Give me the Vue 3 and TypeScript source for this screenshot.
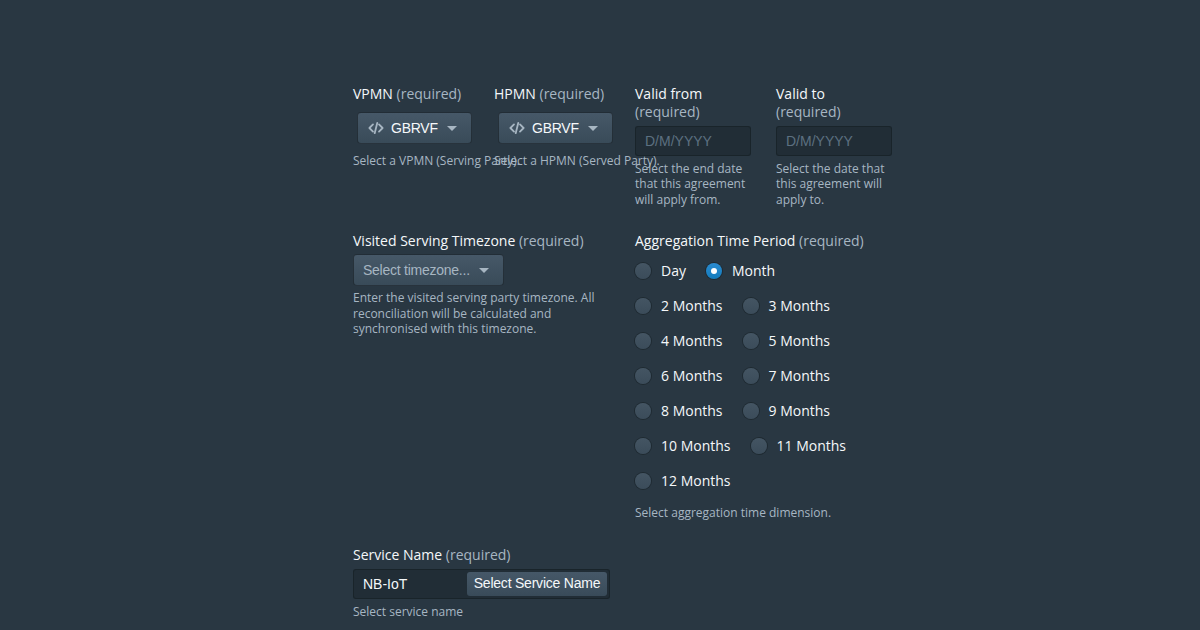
<script setup lang="ts">
const radioRows: string[][] = [
  ['Day', 'Month'],
  ['2 Months', '3 Months'],
  ['4 Months', '5 Months'],
  ['6 Months', '7 Months'],
  ['8 Months', '9 Months'],
  ['10 Months', '11 Months'],
  ['12 Months'],
]
</script>

<template>
  <main class="page">
    <form class="form">
      <section class="row-top">
        <div class="field">
          <label class="label">VPMN <span class="req">(required)</span></label>
          <button type="button" class="btn btn-code">
            <svg class="code" viewBox="0 0 16 16" width="16" height="16"><path d="M5 4.4 1.4 8 5 11.6M11 4.4 14.6 8 11 11.6M9.3 2.8 6.7 13.2" fill="none" stroke="currentColor" stroke-width="1.8" stroke-linecap="round" stroke-linejoin="round"/></svg>
            <span class="btn-text">GBRVF</span>
            <span class="caret"></span>
          </button>
          <p class="help nowrap">Select a VPMN (Serving Party).</p>
        </div>
        <div class="field">
          <label class="label">HPMN <span class="req">(required)</span></label>
          <button type="button" class="btn btn-code">
            <svg class="code" viewBox="0 0 16 16" width="16" height="16"><path d="M5 4.4 1.4 8 5 11.6M11 4.4 14.6 8 11 11.6M9.3 2.8 6.7 13.2" fill="none" stroke="currentColor" stroke-width="1.8" stroke-linecap="round" stroke-linejoin="round"/></svg>
            <span class="btn-text">GBRVF</span>
            <span class="caret"></span>
          </button>
          <p class="help nowrap">Select a HPMN (Served Party).</p>
        </div>
        <div class="field">
          <label class="label">Valid from <span class="req">(required)</span></label>
          <input class="date" placeholder="D/M/YYYY" />
          <p class="help">Select the end date that this agreement will apply from.</p>
        </div>
        <div class="field">
          <label class="label">Valid to <span class="req">(required)</span></label>
          <input class="date" placeholder="D/M/YYYY" />
          <p class="help">Select the date that this agreement will apply to.</p>
        </div>
      </section>

      <section class="row-mid">
        <div class="field">
          <label class="label tz-label">Visited Serving Timezone <span class="req">(required)</span></label>
          <button type="button" class="btn btn-tz">
            <span class="btn-text muted">Select timezone...</span>
            <span class="caret"></span>
          </button>
          <p class="help">Enter the visited serving party timezone. All reconciliation will be calculated and synchronised with this timezone.</p>
        </div>
        <div class="field">
          <label class="label">Aggregation Time Period <span class="req">(required)</span></label>
          <div class="radios">
            <div v-for="(row, i) in radioRows" :key="i" class="radio-row">
              <label v-for="opt in row" :key="opt" class="radio">
                <span class="dot" :class="{ on: opt === 'Month' }"></span>
                <span>{{ opt }}</span>
              </label>
            </div>
          </div>
          <p class="help">Select aggregation time dimension.</p>
        </div>
      </section>

      <section class="service">
        <label class="label">Service Name <span class="req">(required)</span></label>
        <div class="svc-input">
          <span class="svc-value">NB-IoT</span>
          <button type="button" class="svc-btn">Select Service Name</button>
        </div>
        <p class="help">Select service name</p>
      </section>
    </form>
  </main>
</template>

<style>
html, body { margin: 0; background: #293742; }
</style>

<style scoped>
.page {
  width: 1200px;
  height: 630px;
  overflow: hidden;
  background: #293742;
  box-sizing: border-box;
  padding: 85px 0 0 353px;
  font-family: "Open Sans", sans-serif;
  color: #f5f8fa;
}
.form { width: 564px; }
.row-top {
  display: grid;
  grid-template-columns: repeat(4, 141px);
  height: 147px;
}
.row-mid {
  display: grid;
  grid-template-columns: repeat(2, 282px);
  height: 314px;
}
.field { min-width: 0; }
.label {
  display: block;
  font-size: 14px;
  line-height: 18px;
  margin-bottom: 5px;
  padding-right: 24px;
  color: #f5f8fa;
}
.row-mid .label, .service .label { padding-right: 0; }
.tz-label { margin-bottom: 4px; }
.req { color: #a7b6c2; }
.help {
  margin: 5px 0 0;
  font-size: 12px;
  line-height: 15.4px;
  color: #a7b6c2;
}
.row-top .help { padding-right: 24px; }
.row-mid .help { padding-right: 20px; }
.row-mid .field:first-child .help { margin-top: 4.4px; }
.nowrap { white-space: nowrap; padding-right: 0 !important; margin-top: 9px; }
.btn {
  display: inline-flex;
  align-items: center;
  box-sizing: border-box;
  border: 1px solid rgba(16, 22, 26, .55);
  background-clip: border-box;
  border-radius: 4px;
  padding: 0 9px;
  background: linear-gradient(180deg, #465868, #394b59);
  color: #f5f8fa;
  font-family: "Liberation Sans", sans-serif;
  font-size: 14px;
  letter-spacing: -.25px;
}
.btn-code { width: 115px; height: 32px; margin: 4px 0 0 4px; vertical-align: top; padding: 0 10px; }
.btn-tz { width: 151px; height: 32px; vertical-align: top; }
.code { color: #a7b6c2; margin-right: 7px; flex: none; }
.btn-text { white-space: nowrap; }
.muted { color: #a7b6c2; }
.caret {
  width: 0;
  height: 0;
  margin-left: 9.5px;
  border-left: 5px solid transparent;
  border-right: 5px solid transparent;
  border-top: 5px solid #a7b6c2;
}
.date {
  display: block;
  width: 116px;
  height: 30px;
  box-sizing: border-box;
  padding: 0 10px;
  border: 0;
  border-radius: 3px;
  background: rgba(16, 22, 26, .3);
  box-shadow: inset 0 0 0 1px rgba(16, 22, 26, .4);
  font-family: "Liberation Sans", sans-serif;
  font-size: 14px;
  color: #f5f8fa;
  outline: none;
}
.date::placeholder { color: #5c7080; opacity: 1; }
.radios { display: flex; flex-direction: column; padding-top: 6px; }
.radio-row { display: flex; height: 35px; align-items: flex-start; }
.radio-row:last-child { height: 29px; }
.radio {
  display: flex;
  align-items: center;
  gap: 10px;
  margin-right: 20px;
  font-size: 14px;
  line-height: 19px;
  color: #f5f8fa;
}
.dot {
  width: 16px;
  height: 16px;
  border-radius: 50%;
  box-sizing: border-box;
  background: linear-gradient(180deg, #445563, #3b4c5a);
  box-shadow: 0 0 0 1px rgba(16, 22, 26, .4);
  display: flex;
  align-items: center;
  justify-content: center;
}
.dot.on { background: linear-gradient(180deg, #2b8bd0, #137cbd); }
.dot.on::after {
  content: "";
  width: 6px;
  height: 6px;
  border-radius: 50%;
  background: #fff;
}
.service { width: 257px; }
.svc-input {
  display: flex;
  align-items: center;
  justify-content: space-between;
  height: 30px;
  box-sizing: border-box;
  padding: 0 3px 0 10px;
  border-radius: 3px;
  background: rgba(16, 22, 26, .3);
  box-shadow: inset 0 0 0 1px rgba(16, 22, 26, .4);
  font-family: "Liberation Sans", sans-serif;
  font-size: 14px;
}
.svc-value { padding-bottom: 1px; }
.svc-btn {
  height: 24px;
  width: 140px;
  padding: 0 0 2px;
  border: 0;
  border-radius: 3px;
  background: linear-gradient(180deg, #465868, #394b59);
  color: #f5f8fa;
  font-family: "Liberation Sans", sans-serif;
  font-size: 14px;
  letter-spacing: -.22px;
}
</style>
